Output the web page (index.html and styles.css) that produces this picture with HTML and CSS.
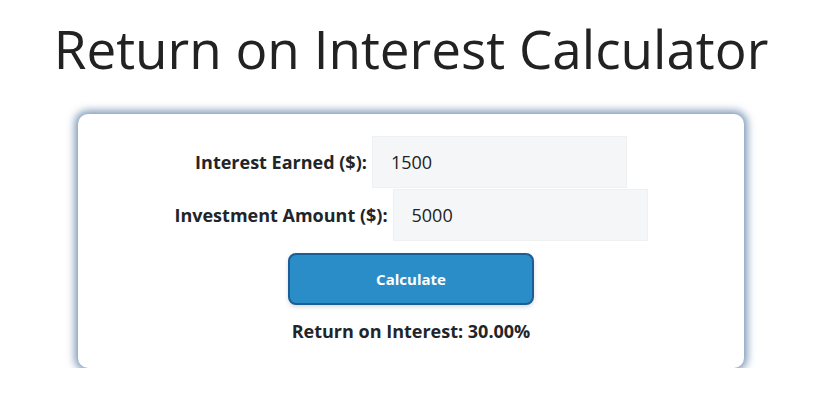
FILE: index.html
```html
<!DOCTYPE html>
<html>
<head>
    <title>Return on Interest Calculator</title>
    <link rel="stylesheet" href="styles.css">
</head>
<body>
    <h1>Return on Interest Calculator</h1>

    <div class="calculator">
        <div class="form-row">
            <label for="interest">Interest Earned ($):</label>
            <input type="text" id="interest" value="1500">
        </div>
        <div class="form-row">
            <label for="investment">Investment Amount ($):</label>
            <input type="text" id="investment" value="5000">
        </div>
        <button id="calcButton">Calculate</button>
        <p id="result" class="result">Return on Interest: 30.00%</p>
    </div>
</body>
</html>
```

FILE: styles.css
```css
body {
    font-family: "Open Sans", Arial, sans-serif;
    margin: 0;
    padding: 0 3px 0 0;
    color: #212529;
    background-color: #fff;
}
h1 {
    font-size: 53px;
    font-weight: normal;
    text-align: center;
    margin: 14px 0 0;
    line-height: 70px;
    color: #222;
}
.calculator {
    width: 666px;
    margin: 30px auto 0;
    padding: 22px 0 25px;
    box-sizing: border-box;
    background-color: #fff;
    border-radius: 10px;
    box-shadow: 0 0 8px 3px rgba(85, 120, 160, 0.8);
    display: flex;
    flex-direction: column;
    align-items: center;
}
.form-row {
    display: flex;
    align-items: center;
    justify-content: center;
    margin-bottom: 1px;
}
label {
    font-weight: bold;
    font-size: 18px;
    margin-right: 5px;
}
input[type="text"] {
    width: 255px;
    height: 52px;
    padding: 0 18px;
    box-sizing: border-box;
    border: 1px solid #eef0f2;
    background-color: #f5f6f8;
    font-family: "Open Sans", Arial, sans-serif;
    font-size: 18px;
    color: #222;
}
button {
    width: 246px;
    height: 52px;
    margin-top: 11px;
    background-color: #2a8dc8;
    color: white;
    border: 2px solid #1b5d96;
    border-radius: 8px;
    font-family: "Open Sans", Arial, sans-serif;
    font-weight: bold;
    font-size: 15px;
    cursor: pointer;
    box-shadow: 0 2px 4px rgba(0, 0, 0, 0.15);
}
.result {
    font-weight: bold;
    font-size: 18px;
    margin: 14px 0 0;
}
```
